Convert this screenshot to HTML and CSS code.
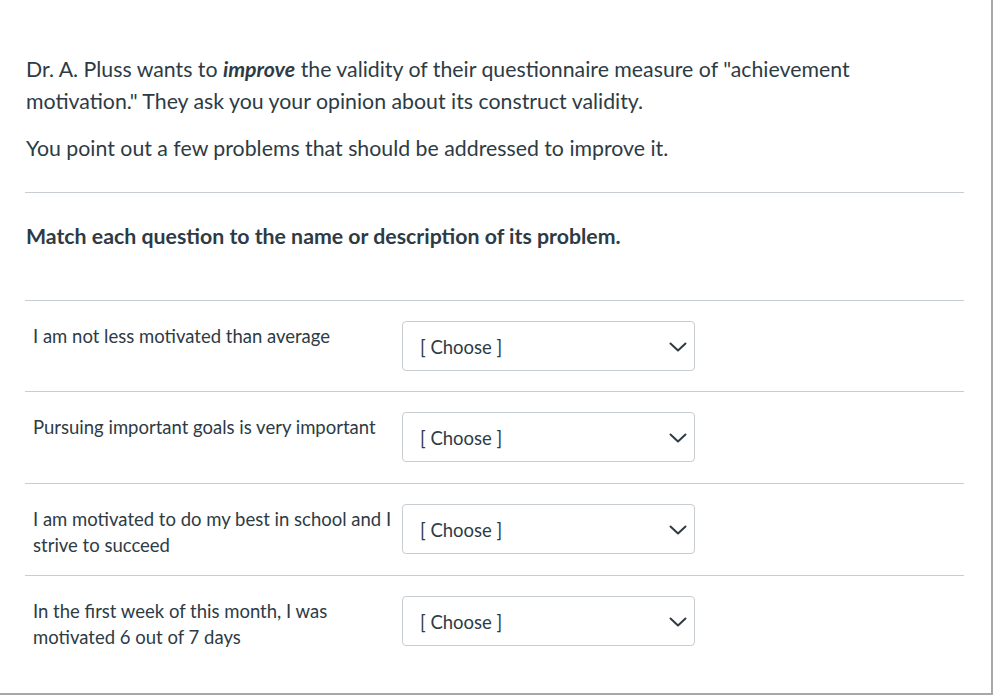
FILE: index.html
```html
<!DOCTYPE html>
<html lang="en">
<head>
<meta charset="utf-8">
<title>Matching question</title>
<link rel="stylesheet" href="styles.css">
</head>
<body>
<div class="card">
  <div class="question-text">
    <p>Dr. A. Pluss wants to <strong><em>improve</em></strong> the validity of their questionnaire measure of "achievement motivation." They ask you your opinion about its construct validity.</p>
    <p>You point out a few problems that should be addressed to improve it.</p>
  </div>
  <div class="instruction">
    <p>Match each question to the name or description of its problem.</p>
  </div>
  <div class="answers">
    <div class="row">
      <div class="prompt">I am not less motivated than average</div>
      <div class="select"><span>[ Choose ]</span><svg class="chev" viewBox="0 0 18 10" width="18" height="10"><path d="M1.5 1.5 L9 8.5 L16.5 1.5" fill="none" stroke="#2d3b45" stroke-width="2" stroke-linecap="round" stroke-linejoin="round"/></svg></div>
    </div>
    <div class="row">
      <div class="prompt">Pursuing important goals is very important</div>
      <div class="select"><span>[ Choose ]</span><svg class="chev" viewBox="0 0 18 10" width="18" height="10"><path d="M1.5 1.5 L9 8.5 L16.5 1.5" fill="none" stroke="#2d3b45" stroke-width="2" stroke-linecap="round" stroke-linejoin="round"/></svg></div>
    </div>
    <div class="row">
      <div class="prompt">I am motivated to do my best in school and I strive to succeed</div>
      <div class="select"><span>[ Choose ]</span><svg class="chev" viewBox="0 0 18 10" width="18" height="10"><path d="M1.5 1.5 L9 8.5 L16.5 1.5" fill="none" stroke="#2d3b45" stroke-width="2" stroke-linecap="round" stroke-linejoin="round"/></svg></div>
    </div>
    <div class="row">
      <div class="prompt">In the first week of this month, I was motivated 6 out of 7 days</div>
      <div class="select"><span>[ Choose ]</span><svg class="chev" viewBox="0 0 18 10" width="18" height="10"><path d="M1.5 1.5 L9 8.5 L16.5 1.5" fill="none" stroke="#2d3b45" stroke-width="2" stroke-linecap="round" stroke-linejoin="round"/></svg></div>
    </div>
  </div>
</div>
</body>
</html>
```

FILE: styles.css
```css
html, body {
  margin: 0;
  padding: 0;
  background: #ffffff;
}

body {
  font-family: Lato, "Open Sans", sans-serif;
  color: #2d3b45;
}

.card {
  box-sizing: border-box;
  width: 993px;
  height: 695px;
  border-right: 2px solid #a8a8a8;
  border-bottom: 2px solid #a8a8a8;
  padding: 53px 27px 0 25px;
}

.question-text {
  font-size: 21.3px;
  line-height: 32px;
  padding-left: 1px;
  padding-right: 40px;
  padding-bottom: 28px;
  border-bottom: 1px solid #c7cdd1;
}

.question-text p {
  margin: 0 0 15px 0;
}

.question-text p:last-child {
  margin-bottom: 0;
}

.instruction {
  font-size: 21.3px;
  line-height: 32px;
  font-weight: 700;
  padding: 27px 0 48px 1px;
}

.instruction p {
  margin: 0;
}

.row {
  display: flex;
  align-items: flex-start;
  gap: 6px;
  border-top: 1px solid #c7cdd1;
  padding: 20px 0 21px 8px;
}

.row:first-child {
  padding-bottom: 20px;
}

.prompt {
  width: 363px;
  font-size: 18.5px;
  line-height: 26px;
  padding-top: 2px;
  margin-bottom: -6px;
}

.select {
  box-sizing: border-box;
  width: 293px;
  height: 50px;
  border: 1px solid #c7cdd1;
  border-radius: 4px;
  display: flex;
  align-items: center;
  justify-content: space-between;
  padding: 0 7px 0 17px;
  font-size: 18.5px;
  background: #ffffff;
}

.select span {
  padding-top: 1px;
}

.chev {
  display: block;
  margin-top: 2px;
}
```
